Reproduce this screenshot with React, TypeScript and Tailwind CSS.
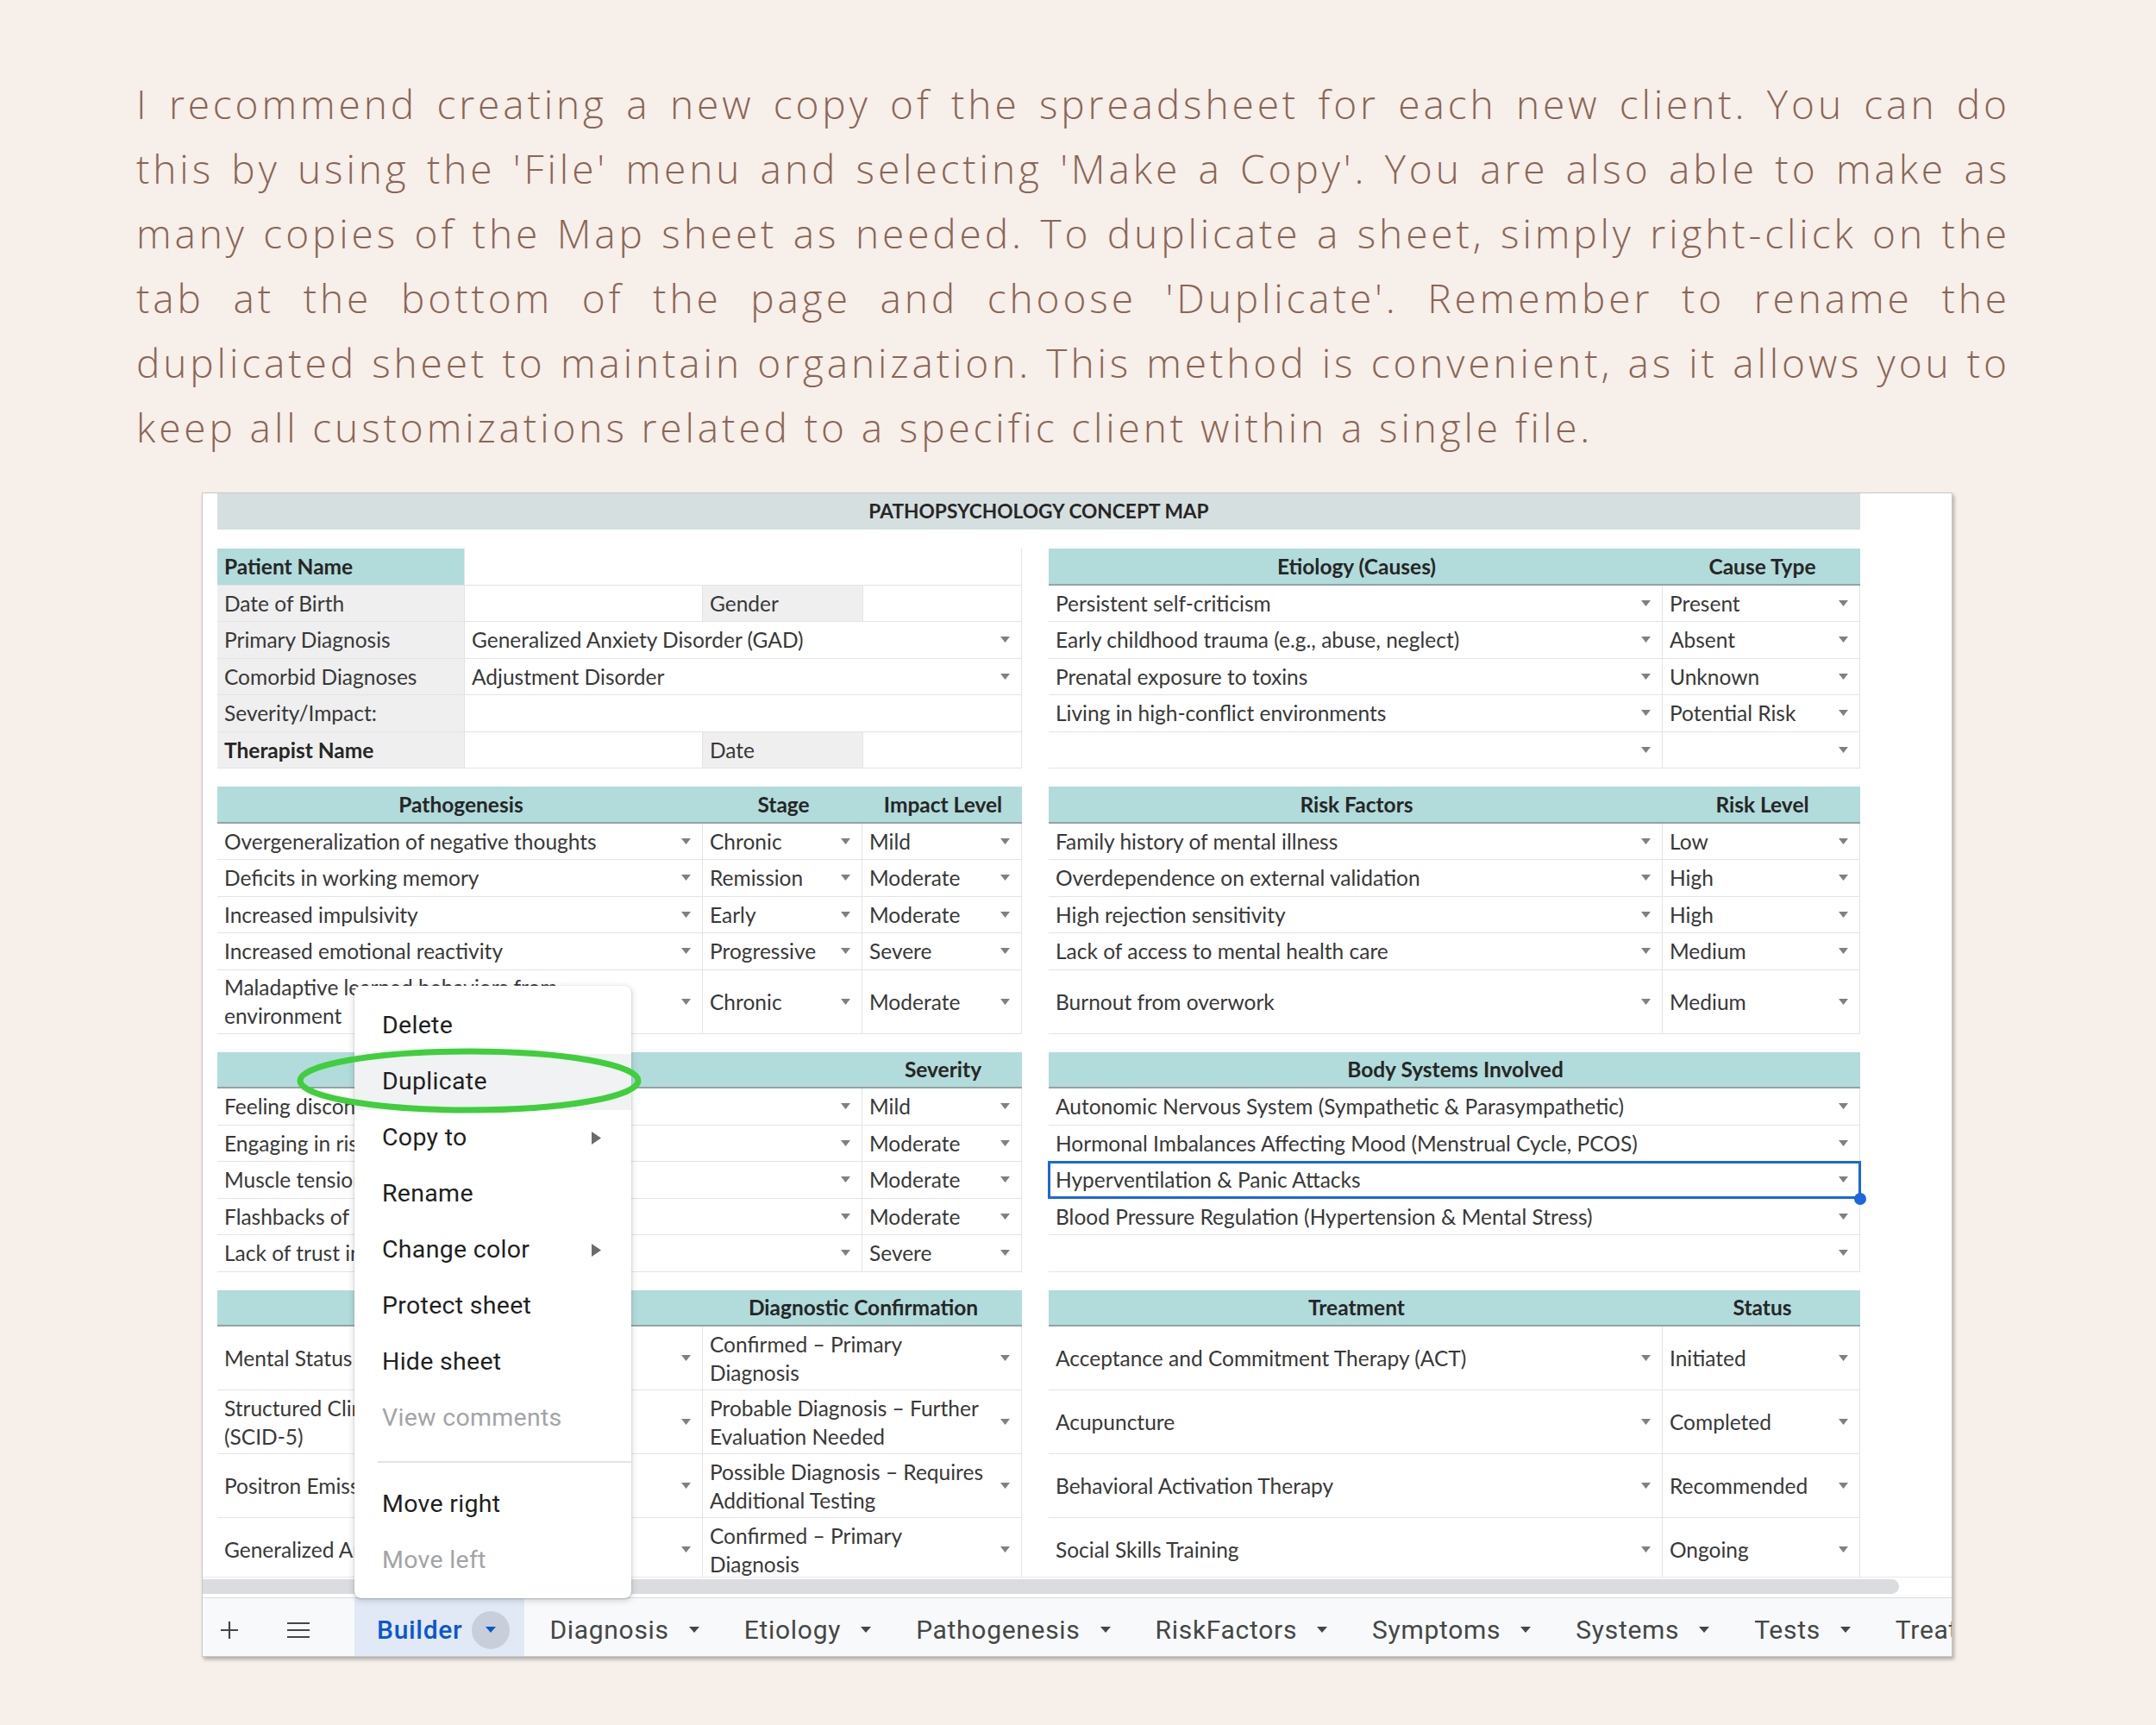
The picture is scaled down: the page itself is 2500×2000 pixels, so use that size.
import React from "react";

const Arrow = () => (
  <svg width="11" height="7" viewBox="0 0 11 7" className="shrink-0">
    <path d="M0 0H11L5.5 7Z" fill="#808080" />
  </svg>
);

type CellProps = {
  w: string;
  children?: React.ReactNode;
  arrow?: boolean;
  bg?: string;
  bold?: boolean;
  center?: boolean;
  header?: boolean;
};

function Cell({ w, children, arrow, bg = "bg-white", bold, center, header }: CellProps) {
  return (
    <div
      className={`${w} ${bg} h-full shrink-0 flex items-center ${header ? "" : "border-r border-[#e4e4e4]"} pl-[8px] ${
        arrow ? "pr-[13px]" : "pr-[6px]"
      }`}
    >
      <div
        className={`flex-1 min-w-0 whitespace-nowrap overflow-hidden leading-[33px] ${
          bold ? "font-bold text-[#262626]" : "text-[#383838]"
        } ${center ? "text-center" : ""}`}
      >
        {children}
      </div>
      {arrow && <Arrow />}
    </div>
  );
}

const HEAD = "bg-[#b2dbdb]";
const LABEL = "bg-[#efefef]";

function HeaderRow({ children }: { children: React.ReactNode }) {
  return <div className="flex h-[42.5px] bg-[#b2dbdb] border-b-2 border-[#94a3a3]">{children}</div>;
}
function Row({ children, tall }: { children: React.ReactNode; tall?: boolean }) {
  return (
    <div className={`flex ${tall ? "h-[74px]" : "h-[42.5px]"} border-b border-[#e4e4e4]`}>{children}</div>
  );
}

const etiology: [string, string][] = [
  ["Persistent self-criticism", "Present"],
  ["Early childhood trauma (e.g., abuse, neglect)", "Absent"],
  ["Prenatal exposure to toxins", "Unknown"],
  ["Living in high-conflict environments", "Potential Risk"],
  ["", ""],
];

const patho: [string, string, string][] = [
  ["Overgeneralization of negative thoughts", "Chronic", "Mild"],
  ["Deficits in working memory", "Remission", "Moderate"],
  ["Increased impulsivity", "Early", "Moderate"],
  ["Increased emotional reactivity", "Progressive", "Severe"],
];

const risks: [string, string][] = [
  ["Family history of mental illness", "Low"],
  ["Overdependence on external validation", "High"],
  ["High rejection sensitivity", "High"],
  ["Lack of access to mental health care", "Medium"],
];

const symptoms: [string, string][] = [
  ["Feeling disconnected from reality", "Mild"],
  ["Engaging in risky behaviors", "Moderate"],
  ["Muscle tension and headaches", "Moderate"],
  ["Flashbacks of traumatic events", "Moderate"],
  ["Lack of trust in others", "Severe"],
];

const systems = [
  "Autonomic Nervous System (Sympathetic & Parasympathetic)",
  "Hormonal Imbalances Affecting Mood (Menstrual Cycle, PCOS)",
  "Hyperventilation & Panic Attacks",
  "Blood Pressure Regulation (Hypertension & Mental Stress)",
  "",
];

const tests: [React.ReactNode, React.ReactNode][] = [
  ["Mental Status Examination (MSE)", <>Confirmed – Primary<br />Diagnosis</>],
  [<>Structured Clinical Interview for DSM-5<br />(SCID-5)</>, <>Probable Diagnosis – Further<br />Evaluation Needed</>],
  ["Positron Emission Tomography (PET)", <>Possible Diagnosis – Requires<br />Additional Testing</>],
  ["Generalized Anxiety Disorder 7 (GAD-7)", <>Confirmed – Primary<br />Diagnosis</>],
];

const treatments: [string, string][] = [
  ["Acceptance and Commitment Therapy (ACT)", "Initiated"],
  ["Acupuncture", "Completed"],
  ["Behavioral Activation Therapy", "Recommended"],
  ["Social Skills Training", "Ongoing"],
];

const lines = [
  "I recommend creating a new copy of the spreadsheet for each new client. You can do",
  "this by using the 'File' menu and selecting 'Make a Copy'. You are also able to make as",
  "many copies of the Map sheet as needed. To duplicate a sheet, simply right-click on the",
  "tab at the bottom of the page and choose 'Duplicate'. Remember to rename the",
  "duplicated sheet to maintain organization. This method is convenient, as it allows you to",
  "keep all customizations related to a specific client within a single file.",
];

const tabs = ["Diagnosis", "Etiology", "Pathogenesis", "RiskFactors", "Symptoms", "Systems", "Tests", "Treatment"];

function TabArrow({ color = "#444746" }: { color?: string }) {
  return (
    <svg width="12" height="7" viewBox="0 0 12 7" className="shrink-0">
      <path d="M0 0H12L6 7Z" fill={color} />
    </svg>
  );
}

function SubArrow() {
  return (
    <svg width="11" height="15" viewBox="0 0 11 15" className="shrink-0">
      <path d="M0 0L11 7.5L0 15Z" fill="#6b6b6b" />
    </svg>
  );
}

function MenuItem({ label, sub, disabled, active }: { label: string; sub?: boolean; disabled?: boolean; active?: boolean }) {
  return (
    <div
      className={`h-[65px] flex items-center justify-between pl-[32px] pr-[35px] ${active ? "bg-[#f1f2f3]" : ""} ${
        disabled ? "text-[#a2a4a7]" : "text-[#1f1f1f]"
      }`}
    >
      <span>{label}</span>
      {sub && <SubArrow />}
    </div>
  );
}

export default function App() {
  return (
    <div className="w-[2500px] h-[2000px] bg-[#f6efea] overflow-hidden">
      {/* paragraph */}
      <div className="w-[2331px] pl-[158px] pt-[83px] text-[#8b6554] [font-family:'Open_Sans',sans-serif] font-light text-[46px] leading-[75px] tracking-[3.9px]">
        {lines.map((l, i) => (
          <div key={i} className={i < 5 ? "text-justify [text-align-last:justify]" : ""}>
            {l}
          </div>
        ))}
      </div>

      {/* spreadsheet screenshot */}
      <div className="relative ml-[234px] mt-[38px] w-[2030px] h-[1350px] bg-white border border-[#c9c9c9] shadow-[2px_3px_4px_rgba(0,0,0,0.28)] overflow-hidden flex flex-col">
        <div className="h-[1256px] shrink-0 overflow-hidden pl-[17px] [font-family:Lato,sans-serif] text-[24.5px]">
          <div className="w-[1905px] h-[42px] bg-[#d6dfdf] flex items-center justify-center font-bold text-[22.7px] text-[#262626]">
            PATHOPSYCHOLOGY CONCEPT MAP
          </div>

          <div className="mt-[22px] flex gap-[31px]">
            {/* LEFT PANEL */}
            <div className="w-[933px] flex flex-col gap-[21px]">
              {/* Patient info */}
              <div>
                <Row>
                  <Cell w="w-[287px]" bg={HEAD} bold>Patient Name</Cell>
                  <Cell w="w-[646px]"></Cell>
                </Row>
                <Row>
                  <Cell w="w-[287px]" bg={LABEL}>Date of Birth</Cell>
                  <Cell w="w-[276px]"></Cell>
                  <Cell w="w-[186px]" bg={LABEL}>Gender</Cell>
                  <Cell w="w-[184px]"></Cell>
                </Row>
                <Row>
                  <Cell w="w-[287px]" bg={LABEL}>Primary Diagnosis</Cell>
                  <Cell w="w-[646px]" arrow>Generalized Anxiety Disorder (GAD)</Cell>
                </Row>
                <Row>
                  <Cell w="w-[287px]" bg={LABEL}>Comorbid Diagnoses</Cell>
                  <Cell w="w-[646px]" arrow>Adjustment Disorder</Cell>
                </Row>
                <Row>
                  <Cell w="w-[287px]" bg={LABEL}>Severity/Impact:</Cell>
                  <Cell w="w-[646px]"></Cell>
                </Row>
                <Row>
                  <Cell w="w-[287px]" bg={LABEL} bold>Therapist Name</Cell>
                  <Cell w="w-[276px]"></Cell>
                  <Cell w="w-[186px]" bg={LABEL}>Date</Cell>
                  <Cell w="w-[184px]"></Cell>
                </Row>
              </div>

              {/* Pathogenesis */}
              <div>
                <HeaderRow>
                  <Cell w="w-[563px]" bg={HEAD} bold center header>Pathogenesis</Cell>
                  <Cell w="w-[185px]" bg={HEAD} bold center header>Stage</Cell>
                  <Cell w="w-[185px]" bg={HEAD} bold center header>Impact Level</Cell>
                </HeaderRow>
                {patho.map(([a, b, c]) => (
                  <Row key={a}>
                    <Cell w="w-[563px]" arrow>{a}</Cell>
                    <Cell w="w-[185px]" arrow>{b}</Cell>
                    <Cell w="w-[185px]" arrow>{c}</Cell>
                  </Row>
                ))}
                <Row tall>
                  <Cell w="w-[563px]" arrow>
                    Maladaptive learned behaviors from
                    <br />
                    environment
                  </Cell>
                  <Cell w="w-[185px]" arrow>Chronic</Cell>
                  <Cell w="w-[185px]" arrow>Moderate</Cell>
                </Row>
              </div>

              {/* Symptoms */}
              <div>
                <HeaderRow>
                  <Cell w="w-[748px]" bg={HEAD} bold center header>Symptoms</Cell>
                  <Cell w="w-[185px]" bg={HEAD} bold center header>Severity</Cell>
                </HeaderRow>
                {symptoms.map(([a, b]) => (
                  <Row key={a}>
                    <Cell w="w-[748px]" arrow>{a}</Cell>
                    <Cell w="w-[185px]" arrow>{b}</Cell>
                  </Row>
                ))}
              </div>

              {/* Diagnostic */}
              <div>
                <HeaderRow>
                  <Cell w="w-[563px]" bg={HEAD} bold center header>Diagnostic Tests</Cell>
                  <Cell w="w-[370px]" bg={HEAD} bold center header>Diagnostic Confirmation</Cell>
                </HeaderRow>
                {tests.map(([a, b], i) => (
                  <Row key={i} tall>
                    <Cell w="w-[563px]" arrow>{a}</Cell>
                    <Cell w="w-[370px]" arrow>{b}</Cell>
                  </Row>
                ))}
              </div>
            </div>

            {/* RIGHT PANEL */}
            <div className="w-[941px] flex flex-col gap-[21px]">
              <div>
                <HeaderRow>
                  <Cell w="w-[712px]" bg={HEAD} bold center header>Etiology (Causes)</Cell>
                  <Cell w="w-[229px]" bg={HEAD} bold center header>Cause Type</Cell>
                </HeaderRow>
                {etiology.map(([a, b], i) => (
                  <Row key={i}>
                    <Cell w="w-[712px]" arrow>{a}</Cell>
                    <Cell w="w-[229px]" arrow>{b}</Cell>
                  </Row>
                ))}
              </div>

              <div>
                <HeaderRow>
                  <Cell w="w-[712px]" bg={HEAD} bold center header>Risk Factors</Cell>
                  <Cell w="w-[229px]" bg={HEAD} bold center header>Risk Level</Cell>
                </HeaderRow>
                {risks.map(([a, b]) => (
                  <Row key={a}>
                    <Cell w="w-[712px]" arrow>{a}</Cell>
                    <Cell w="w-[229px]" arrow>{b}</Cell>
                  </Row>
                ))}
                <Row tall>
                  <Cell w="w-[712px]" arrow>Burnout from overwork</Cell>
                  <Cell w="w-[229px]" arrow>Medium</Cell>
                </Row>
              </div>

              <div>
                <HeaderRow>
                  <Cell w="w-[941px]" bg={HEAD} bold center header>Body Systems Involved</Cell>
                </HeaderRow>
                {systems.map((s, i) => (
                  <Row key={i}>
                    {i === 2 ? (
                      <div className="relative w-[941px] h-full">
                        <Cell w="w-[941px]" arrow>{s}</Cell>
                        <div className="absolute inset-[-1px] border-[3px] border-[#1a68dc] pointer-events-none" />
                        <div className="absolute right-[-7px] bottom-[-8px] w-[14px] h-[14px] rounded-full bg-[#1a68dc] z-10" />
                      </div>
                    ) : (
                      <Cell w="w-[941px]" arrow>{s}</Cell>
                    )}
                  </Row>
                ))}
              </div>

              <div>
                <HeaderRow>
                  <Cell w="w-[712px]" bg={HEAD} bold center header>Treatment</Cell>
                  <Cell w="w-[229px]" bg={HEAD} bold center header>Status</Cell>
                </HeaderRow>
                {treatments.map(([a, b]) => (
                  <Row key={a} tall>
                    <Cell w="w-[712px]" arrow>{a}</Cell>
                    <Cell w="w-[229px]" arrow>{b}</Cell>
                  </Row>
                ))}
              </div>
            </div>
          </div>
        </div>

        {/* horizontal scrollbar */}
        <div className="h-[24px] shrink-0 bg-white pt-[2px] border-t border-[#e8e8e8]">
          <div className="w-[1967px] h-[17px] rounded-r-full bg-[#dadce0]" />
        </div>

        {/* tab bar */}
        <div className="h-[68px] shrink-0 bg-[#f8f9fa] border-t border-[#dadce0] flex items-stretch [font-family:Roboto,sans-serif] text-[30px] tracking-[0.7px] text-[#444746] whitespace-nowrap">
          <div className="ml-[20px] w-[22px] pt-[6px] flex items-center justify-center">
            <svg width="22" height="22" viewBox="0 0 22 22">
              <path d="M11 1V21M1 11H21" stroke="#444746" strokeWidth="2.2" />
            </svg>
          </div>
          <div className="ml-[56px] w-[26px] pt-[6px] flex items-center">
            <svg width="26" height="20" viewBox="0 0 26 20">
              <path d="M0 2H26M0 10H26M0 18H26" stroke="#444746" strokeWidth="2.2" />
            </svg>
          </div>
          <div className="ml-[52px] pt-[6px] flex items-center bg-[#e1e9f7] pl-[26px] pr-[17px]">
            <span className="text-[#0b57d0] font-medium">Builder</span>
            <div className="ml-[11px] w-[44px] h-[44px] rounded-full bg-[#c8cfdb] flex items-center justify-center">
              <TabArrow color="#0b57d0" />
            </div>
          </div>
          {tabs.map((t) => (
            <div key={t} className="pt-[6px] flex items-center gap-[23px] pl-[29px] pr-[23px]">
              <span>{t}</span>
              <TabArrow />
            </div>
          ))}
        </div>

        {/* context menu */}
        <div className="absolute left-[176px] top-[571px] w-[321px] h-[710px] bg-white rounded-[8px] shadow-[0_2px_6px_2px_rgba(60,64,67,0.15),0_1px_2px_rgba(60,64,67,0.3)] pt-[14px] [font-family:Roboto,sans-serif] text-[28.5px] tracking-[0.3px] z-20">
          <MenuItem label="Delete" />
          <MenuItem label="Duplicate" active />
          <MenuItem label="Copy to" sub />
          <MenuItem label="Rename" />
          <MenuItem label="Change color" sub />
          <MenuItem label="Protect sheet" />
          <MenuItem label="Hide sheet" />
          <MenuItem label="View comments" disabled />
          <div className="h-[35px] flex items-center pl-[27px]">
            <div className="w-full h-[2px] bg-[#e3e3e3]" />
          </div>
          <MenuItem label="Move right" />
          <MenuItem label="Move left" disabled />
        </div>

        {/* green highlight ellipse */}
        <svg className="absolute left-[108px] top-[643px] z-30" width="402" height="76" viewBox="0 0 402 76">
          <ellipse cx="201" cy="38" rx="196" ry="34" fill="none" stroke="#3fcf3c" strokeWidth="7" />
        </svg>
      </div>
    </div>
  );
}
